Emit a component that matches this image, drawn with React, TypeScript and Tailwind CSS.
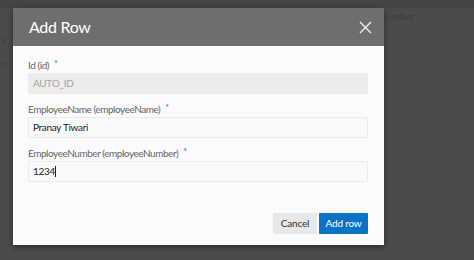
import React from "react";

export default function App() {
  const font = { fontFamily: 'Lato, "Noto Sans", Arial, sans-serif' };
  return (
    <div className="relative w-[474px] h-[260px] overflow-hidden bg-[#4a4b4d]" style={font}>
      {/* underlying page, dimmed */}
      <div className="absolute left-0 top-0 w-full h-[8px] bg-[#444547]" />
      <div className="absolute left-[386px] top-[9px] text-[10px] text-[#3d3e40]">umber</div>
      <div className="absolute left-[1px] top-[32px] text-[10px] text-[#3d3e40]">a</div>
      <div className="absolute left-[1px] top-[56px] text-[10px] text-[#3d3e40]">o</div>

      {/* dialog */}
      <div className="absolute left-[13px] top-[8px] w-[371px] h-[237px] flex flex-col bg-[#fbfbfd] shadow-[0_2px_6px_rgba(0,0,0,0.45)]">
        <div className="h-[38px] bg-[#6e6e6e] flex items-center justify-between pl-[16px] pr-[12px]">
          <span className="text-[16px] tracking-[-0.3px] text-white leading-none">Add Row</span>
          <svg width="13" height="13" viewBox="0 0 13 13">
            <path d="M1 1 L12 12 M12 1 L1 12" stroke="#f2f2f2" strokeWidth="1.4" />
          </svg>
        </div>
        <div className="flex flex-col pl-[15px] pr-[16px] pt-[13px] gap-[9px]">
          <Field label="Id (id)" value="AUTO_ID" disabled />
          <Field label="EmployeeName (employeeName)" value="Pranay Tiwari" />
          <Field label="EmployeeNumber (employeeNumber)" value="1234" caret />
        </div>
        <div className="mt-auto flex justify-end gap-[2px] pr-[16px] pb-[11px]">
          <button className="w-[44px] h-[21px] bg-[#e8e8e8] text-[#333] text-[10px] tracking-[-0.2px] rounded-[1px]">Cancel</button>
          <button className="w-[49px] h-[21px] bg-[#0b73c6] text-white text-[10px] tracking-[-0.2px] rounded-[1px]">Add row</button>
        </div>
      </div>
    </div>
  );
}

function Field({ label, value, disabled, caret }: { label: string; value: string; disabled?: boolean; caret?: boolean }) {
  return (
    <div className="flex flex-col">
      <div className="h-[13px] text-[10px] tracking-[-0.45px] leading-[13px] text-[#666] flex items-start">
        <span>{label}</span>
        <span className="ml-[5px] text-[#3a6fa8] text-[9px] leading-[9px]">*</span>
      </div>
      <div
        className={
          "mt-[1px] h-[21px] flex items-center pl-[4px] text-[10px] tracking-[-0.3px] border " +
          (disabled ? "bg-[#ececec] border-[#ececec] text-[#a3a3a3]" : "bg-[#fafafa] border-[#ebebeb] text-[#222]")
        }
      >
        <span>{value}</span>
        {caret ? <span className="w-[1px] h-[11px] bg-[#222]" /> : null}
      </div>
    </div>
  );
}
